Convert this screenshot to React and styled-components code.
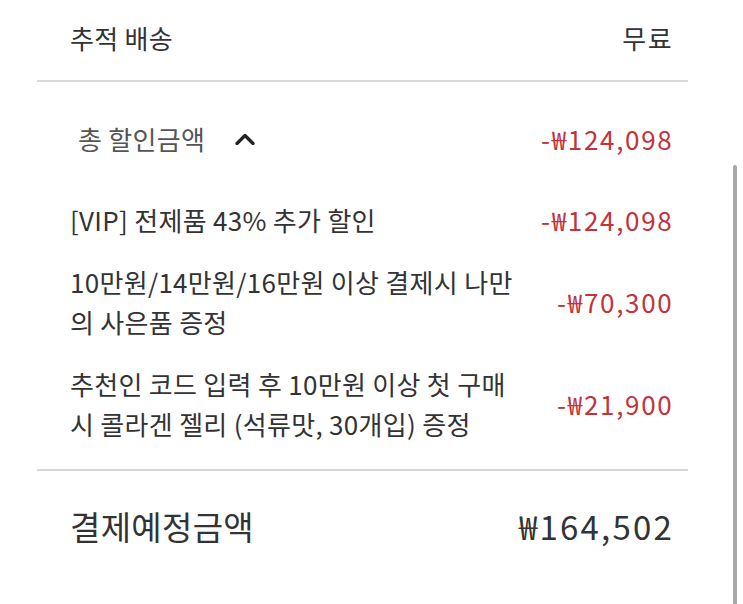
import React from "react";
import styled, { createGlobalStyle } from "styled-components";

const GlobalStyle = createGlobalStyle`
  html, body {
    margin: 0;
    padding: 0;
    background: #fff;
  }
  body {
    font-family: "Noto Sans CJK KR", "Noto Sans", sans-serif;
    color: #333;
    -webkit-font-smoothing: antialiased;
  }
`;

const Page = styled.div`
  position: relative;
  width: 743px;
  height: 604px;
  overflow: hidden;
  background: #fff;
`;

const Panel = styled.div`
  margin: 0 55px 0 37px;
`;

const Row = styled.div`
  display: flex;
  justify-content: space-between;
  align-items: center;
  padding: 0 16px 0 33px;
  font-size: ${(p) => (p.$big ? "33px" : "26px")};
  line-height: 40px;
  color: #333;
  letter-spacing: 0.3px;
  padding-top: ${(p) => p.$top || 0}px;
  padding-bottom: ${(p) => p.$bottom || 0}px;
`;

const Divider = styled.hr`
  margin: 0;
  border: none;
  height: 2px;
  background: #d9d9d9;
`;

const Toggle = styled.button`
  display: flex;
  align-items: center;
  gap: 30px;
  margin-left: 8px;
  padding: 0;
  border: none;
  background: none;
  font: inherit;
  letter-spacing: inherit;
  color: #555;
  cursor: pointer;

  svg {
    width: 20px;
    height: 12px;
  }
`;

const Details = styled.div`
  display: flex;
  flex-direction: column;
  gap: 22px;
  padding-top: 41px;
  padding-bottom: 25px;
`;

const Label = styled.div`
  max-width: 450px;
`;

const Amount = styled.span`
  color: ${(p) => (p.$discount ? "#c2333c" : "#333")};
  white-space: nowrap;
  letter-spacing: ${(p) => (p.$big ? "2.2px" : "1.7px")};
  margin-right: ${(p) => (p.$big ? "-2px" : "-1.5px")};
`;

const Scrollbar = styled.div`
  position: absolute;
  right: 6px;
  top: 165px;
  bottom: 0;
  width: 4px;
  border-radius: 2px 2px 0 0;
  background: #a8a8a8;
`;

const discounts = [
  { label: "[VIP] 전제품 43% 추가 할인", amount: "-₩124,098" },
  { label: "10만원/14만원/16만원 이상 결제시 나만의 사은품 증정", amount: "-₩70,300" },
  { label: "추천인 코드 입력 후 10만원 이상 첫 구매시 콜라겐 젤리 (석류맛, 30개입) 증정", amount: "-₩21,900" },
];

function ChevronUp() {
  return (
    <svg viewBox="0 0 20 12" fill="none">
      <path d="M2 10.5 L10 2.5 L18 10.5" stroke="#222" strokeWidth="3.2" strokeLinecap="round" strokeLinejoin="round" />
    </svg>
  );
}

export default function App() {
  return (
    <Page>
      <GlobalStyle />
      <Panel>
        <Row $top={18} $bottom={22}>
          <span>추적 배송</span>
          <Amount>무료</Amount>
        </Row>
        <Divider />
        <Row $top={37}>
          <Toggle>
            <span>총 할인금액</span>
            <ChevronUp />
          </Toggle>
          <Amount $discount>-₩124,098</Amount>
        </Row>
        <Details>
          {discounts.map((d) => (
            <Row key={d.label}>
              <Label>{d.label}</Label>
              <Amount $discount>{d.amount}</Amount>
            </Row>
          ))}
        </Details>
        <Divider />
        <Row $big $top={35}>
          <span>결제예정금액</span>
          <Amount $big>₩164,502</Amount>
        </Row>
      </Panel>
      <Scrollbar />
    </Page>
  );
}
